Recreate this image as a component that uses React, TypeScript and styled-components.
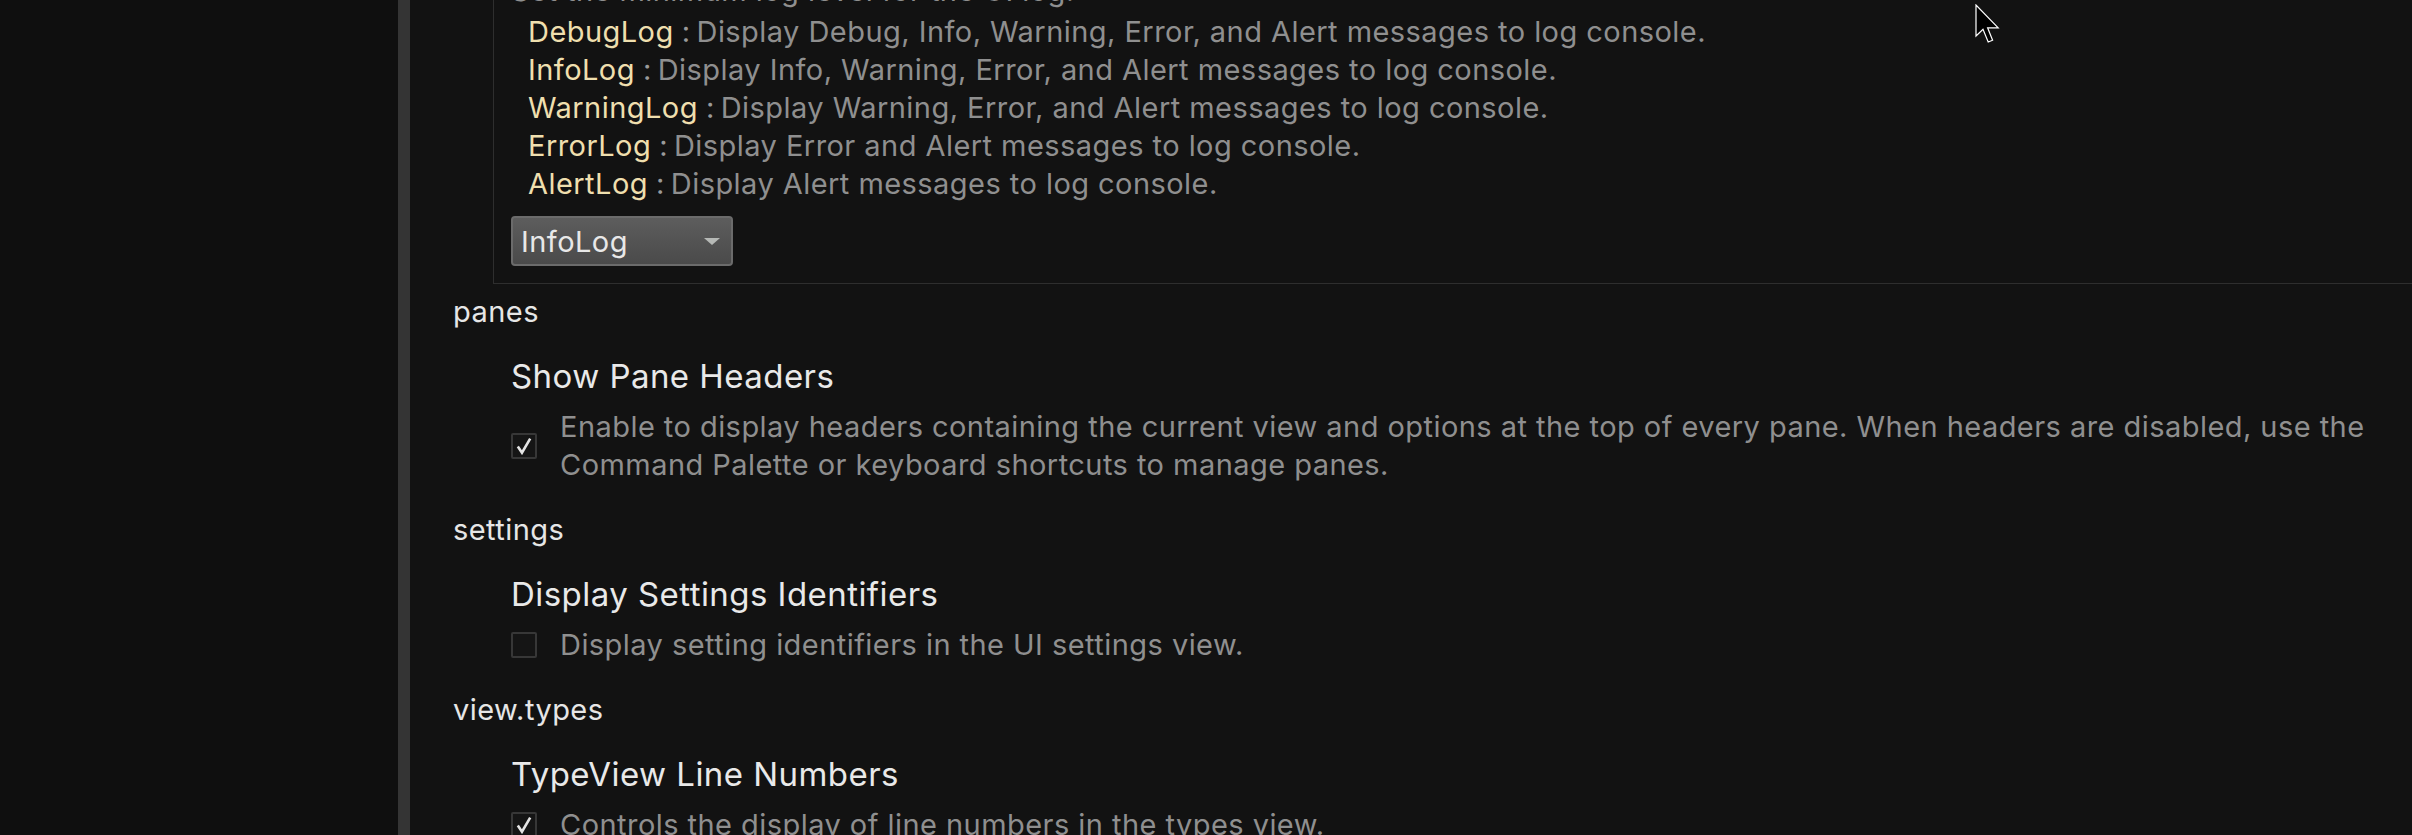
import styled, { createGlobalStyle } from 'styled-components';

const GlobalStyle = createGlobalStyle`
  html, body {
    margin: 0;
    padding: 0;
    background: #121212;
  }
  body {
    font-family: Inter, "Noto Sans", sans-serif;
    overflow: hidden;
  }
`;

const Window = styled.div`
  position: relative;
  display: flex;
  width: 2412px;
  height: 835px;
  overflow: hidden;
  background: #121212;
`;

const Sidebar = styled.div`
  flex: none;
  width: 398px;
  background: #0f0f0f;
`;

const Splitter = styled.div`
  flex: none;
  width: 12px;
  background: #343434;
`;

const Content = styled.div`
  flex: 1;
  min-width: 0;
  padding-left: 43px;
`;

const Section = styled.div<{ $first?: boolean }>`
  margin-top: ${(p) => (p.$first ? '9px' : '27px')};
`;

const SectionLabel = styled.div`
  font-size: 29px;
  line-height: 38px;
  letter-spacing: 0.45px;
  color: #e6e6e6;
`;

const Items = styled.div<{ $offscreen?: boolean }>`
  margin-left: 40px;
  margin-top: ${(p) => (p.$offscreen ? '0' : '23px')};
`;

const Setting = styled.div<{ $selected?: boolean }>`
  padding-left: 18px;
  ${(p) =>
    p.$selected &&
    `
    margin-top: -40px;
    padding: 11px 0 17px 17px;
    border: 1px solid #2e2e2e;
    border-right: none;
  `}
`;

const Title = styled.div`
  font-size: 33px;
  line-height: 44px;
  letter-spacing: 0.45px;
  color: #e9e9e9;
`;

const Text = styled.div`
  font-size: 29px;
  line-height: 38px;
  letter-spacing: 0.45px;
  color: #8f8f8f;
`;

const DescRow = styled.div`
  display: flex;
  align-items: center;
  gap: 23px;
  margin-top: 10px;
`;

const Box = styled.div`
  flex: none;
  display: flex;
  align-items: center;
  justify-content: center;
  width: 26px;
  height: 26px;
  box-sizing: border-box;
  border: 2px solid #373737;
  border-radius: 2px;
  background: #151515;
`;

const KeyList = styled.div`
  margin-top: 3px;
  padding-left: 17px;
`;

const KeyLine = styled(Text)`
  white-space: nowrap;
`;

const Key = styled.span`
  color: #efdfae;
`;

const Colon = styled.span`
  margin: 0 6px 0 8px;
  color: #9a9a9a;
`;

const Select = styled.div`
  position: relative;
  display: flex;
  align-items: center;
  width: 222px;
  height: 50px;
  margin-top: 13px;
  padding-left: 8px;
  box-sizing: border-box;
  border: 2px solid #6b6b6b;
  border-radius: 4px;
  background: linear-gradient(#5d5d5d, #4a4a4a);
  font-size: 29px;
  letter-spacing: 0.45px;
  color: #e8e8e8;
`;

const Caret = styled.span`
  position: absolute;
  right: 11px;
  top: 20px;
  width: 0;
  height: 0;
  border-left: 8px solid transparent;
  border-right: 8px solid transparent;
  border-top: 7px solid #b6b9b6;
`;

const Pointer = styled.svg`
  position: absolute;
  left: 1975px;
  top: 4px;
`;

const Check = ({ on }: { on?: boolean }) => (
  <Box>
    {on && (
      <svg width="18" height="18" viewBox="0 0 16 16">
        <path d="M2.5 8.5 L6.2 14 L13.5 1.5" fill="none" stroke="#e4e4e4" strokeWidth="2.3" strokeLinejoin="miter" />
      </svg>
    )}
  </Box>
);

const logLevels = [
  ['DebugLog', 'Display Debug, Info, Warning, Error, and Alert messages to log console.'],
  ['InfoLog', 'Display Info, Warning, Error, and Alert messages to log console.'],
  ['WarningLog', 'Display Warning, Error, and Alert messages to log console.'],
  ['ErrorLog', 'Display Error and Alert messages to log console.'],
  ['AlertLog', 'Display Alert messages to log console.'],
];

const App = () => {
  return (
    <Window>
      <GlobalStyle />
      <Sidebar />
      <Splitter />
      <Content>
        <Items $offscreen>
          <Setting $selected>
            <Text>Set the minimum log level for the UI log.</Text>
            <KeyList>
              {logLevels.map(([key, desc]) => (
                <KeyLine key={key}>
                  <Key>{key}</Key>
                  <Colon>:</Colon>
                  {desc}
                </KeyLine>
              ))}
            </KeyList>
            <Select>
              InfoLog
              <Caret />
            </Select>
          </Setting>
        </Items>

        <Section $first>
          <SectionLabel>panes</SectionLabel>
          <Items>
            <Setting>
              <Title>Show Pane Headers</Title>
              <DescRow>
                <Check on />
                <Text>
                  Enable to display headers containing the current view and options at the top of every pane. When headers are disabled, use the
                  <br />
                  Command Palette or keyboard shortcuts to manage panes.
                </Text>
              </DescRow>
            </Setting>
          </Items>
        </Section>

        <Section>
          <SectionLabel>settings</SectionLabel>
          <Items>
            <Setting>
              <Title>Display Settings Identifiers</Title>
              <DescRow>
                <Check />
                <Text>Display setting identifiers in the UI settings view.</Text>
              </DescRow>
            </Setting>
          </Items>
        </Section>

        <Section>
          <SectionLabel>view.types</SectionLabel>
          <Items>
            <Setting>
              <Title>TypeView Line Numbers</Title>
              <DescRow>
                <Check on />
                <Text>Controls the display of line numbers in the types view.</Text>
              </DescRow>
            </Setting>
          </Items>
        </Section>
      </Content>

      <Pointer width="25" height="40" viewBox="0 0 12.5 20">
        <path
          d="M0.5 0.5 L0.5 16 L4 12.6 L6.6 19 L8.8 18.1 L6.3 11.9 L11.6 11.9 Z"
          fill="#000"
          stroke="#fff"
          strokeWidth="0.6"
          strokeLinejoin="miter"
        />
      </Pointer>
    </Window>
  );
};

export default App;
